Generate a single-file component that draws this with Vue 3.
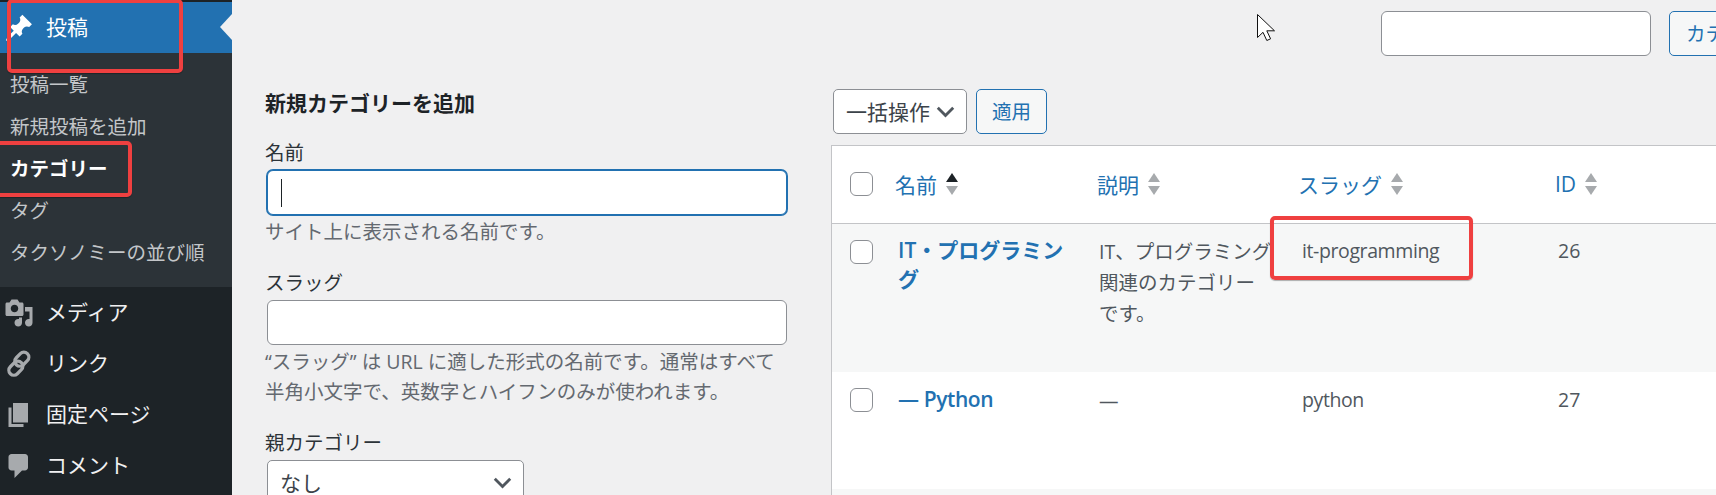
<script setup>
const sub = [
  { label: '投稿一覧' },
  { label: '新規投稿を追加' },
  { label: 'カテゴリー', current: true },
  { label: 'タグ' },
  { label: 'タクソノミーの並び順' }
]
const columns = [
  { label: '名前', active: true },
  { label: '説明' },
  { label: 'スラッグ' },
  { label: 'ID' }
]
</script>

<template>
  <div class="page">
    <aside class="sidebar">
      <div class="item active">
        <svg class="icon" viewBox="0 0 20 20"><path d="M10.44 3.02l1.82-1.82 6.36 6.35-1.83 1.82c-1.05-.68-2.48-.57-3.41.36l-.75.75c-.92.93-1.04 2.35-.35 3.41l-1.83 1.82-2.41-2.41-2.8 2.79c-.42.42-3.38 2.71-3.8 2.29s1.86-3.39 2.28-3.81l2.79-2.79L4.1 9.36l1.83-1.82c1.05.69 2.48.57 3.4-.36l.75-.75c.93-.92 1.05-2.35.36-3.41z"/></svg>
        <span>投稿</span>
        <i class="notch"></i>
      </div>
      <ul class="submenu">
        <li v-for="s in sub" :key="s.label" :class="{ current: s.current }">{{ s.label }}</li>
      </ul>
      <div class="item">
        <svg class="icon" viewBox="0 0 20 20"><path d="M13 11V4c0-.55-.45-1-1-1h-1.67L9 1H5L3.67 3H2c-.55 0-1 .45-1 1v7c0 .55.45 1 1 1h10c.55 0 1-.45 1-1zM7 4.5c1.38 0 2.5 1.12 2.5 2.5S8.38 9.5 7 9.5 4.5 8.38 4.5 7 5.62 4.5 7 4.5zM14 6h5v10.5c0 1.38-1.12 2.5-2.5 2.5S14 17.88 14 16.5s1.12-2.5 2.5-2.5c.17 0 .34.02.5.05V9h-3V6zm-4 8.05V13h2v3.5c0 1.38-1.12 2.5-2.5 2.5S7 17.88 7 16.5 8.12 14 9.5 14c.17 0 .34.02.5.05z"/></svg>
        <span>メディア</span>
      </div>
      <div class="item">
        <svg class="icon" viewBox="0 0 20 20"><g fill="none" stroke="#a7aaad" stroke-width="2.2"><rect x="8.6" y="1.6" width="6.6" height="10.4" rx="3.3" transform="rotate(45 11.9 6.8)"/><rect x="4.6" y="7.6" width="6.6" height="10.4" rx="3.3" transform="rotate(45 7.9 12.8)"/></g></svg>
        <span>リンク</span>
      </div>
      <div class="item">
        <svg class="icon" viewBox="0 0 20 20"><path d="M6 15V2h10v13H6zm-1 1h8v2H3V5h2v11z"/></svg>
        <span>固定ページ</span>
      </div>
      <div class="item">
        <svg class="icon" viewBox="0 0 20 20"><path d="M5 2h9c1.1 0 2 .9 2 2v7c0 1.1-.9 2-2 2h-2l-5 5v-5H5c-1.1 0-2-.9-2-2V4c0-1.1.9-2 2-2z"/></svg>
        <span>コメント</span>
      </div>
    </aside>

    <section class="form">
      <h2>新規カテゴリーを追加</h2>
      <label>名前</label>
      <div class="input focus"><i class="caret"></i></div>
      <p class="hint">サイト上に表示される名前です。</p>
      <label class="next">スラッグ</label>
      <div class="input"></div>
      <p class="hint">“スラッグ” は URL に適した形式の名前です。通常はすべて<br>半角小文字で、英数字とハイフンのみが使われます。</p>
      <label class="next">親カテゴリー</label>
      <div class="select parent">
        <span>なし</span>
        <svg class="chev" viewBox="0 0 16 10"><path d="M1.500 1.500L8 8l6.500-6.500" fill="none" stroke="#50575e" stroke-width="2.400"/></svg>
      </div>
    </section>

    <section class="list">
      <div class="search">
        <div class="input search-input"></div>
        <div class="btn search-btn">カテゴリーを検索</div>
      </div>
      <div class="bulk">
        <div class="select bulk-select">
          <span>一括操作</span>
          <svg class="chev" viewBox="0 0 16 10"><path d="M1.500 1.500L8 8l6.500-6.500" fill="none" stroke="#50575e" stroke-width="2.400"/></svg>
        </div>
        <div class="btn apply">適用</div>
      </div>
      <table>
        <colgroup>
          <col class="c0"><col class="c1"><col class="c2"><col class="c3"><col>
        </colgroup>
        <thead>
          <tr>
            <th class="cb"><i class="box"></i></th>
            <th v-for="c in columns" :key="c.label">
              <span class="th-inner">
                {{ c.label }}
                <svg class="sort" viewBox="0 0 14 24">
                  <path d="M7 1l6 9H1z" :fill="c.active ? '#1d2327' : '#a7aaad'"/>
                  <path d="M7 23L1 14h12z" fill="#a7aaad"/>
                </svg>
              </span>
            </th>
          </tr>
        </thead>
        <tbody>
          <tr class="alt r1">
            <td class="cb"><i class="box"></i></td>
            <td class="title">IT・プログラミン<br>グ</td>
            <td class="desc">IT、プログラミング<br>関連のカテゴリー<br>です。</td>
            <td class="latin slug">it-programming</td>
            <td>26</td>
          </tr>
          <tr class="r2">
            <td class="cb"><i class="box"></i></td>
            <td class="title latin">— Python</td>
            <td class="desc">—</td>
            <td class="latin slug">python</td>
            <td>27</td>
          </tr>
          <tr class="alt r3"><td colspan="5"></td></tr>
        </tbody>
      </table>
    </section>

    <svg class="cursor" viewBox="0 0 18 27"><path d="M.5.5v23l5.500-5.200 3.800 8.200 3.800-1.700-3.800-8h7.700z" fill="#fff" stroke="#111" stroke-width="1"/></svg>
    <i class="mark m1"></i>
    <i class="mark m2"></i>
    <i class="mark m3"></i>
  </div>
</template>

<style scoped>
.page {
  position: relative;
  display: flex;
  width: 1716px;
  height: 495px;
  overflow: hidden;
  background: #f0f0f1;
  font-family: "Open Sans", "Noto Sans CJK JP", sans-serif;
  font-size: 19.5px;
  color: #3c434a;
}
.sidebar {
  flex: 0 0 232px;
  background: #1d2327;
  padding-top: 2px;
  color: #f0f0f1;
}
.item {
  position: relative;
  display: flex;
  align-items: center;
  height: 51px;
  padding-left: 4px;
  font-size: 21px;
}
.item span { margin: 0 0 3px 12px; }
.item.active { background: #2271b1; color: #fff; }
.icon { width: 30px; height: 30px; flex: none; fill: #a7aaad; }
.active .icon { fill: #fff; }
.notch {
  position: absolute;
  right: 0;
  top: 12px;
  border: 13px solid transparent;
  border-left-width: 0;
  border-right: 12px solid #f0f0f1;
}
.submenu {
  list-style: none;
  margin: 0;
  padding: 11px 0 13px 10px;
  height: 234px;
  box-sizing: border-box;
  background: #2c3338;
  color: #c3c6c9;
}
.submenu li { height: 42px; line-height: 42px; font-size: 19.5px; white-space: nowrap; }
.submenu .current { color: #fff; font-weight: 700; }

.form {
  flex: 0 0 524px;
  margin-left: 33px;
  padding-top: 88px;
  color: #2c3338;
}
.form h2 { margin: 0 0 21px; font-size: 21px; line-height: 30px; font-weight: 700; color: #1d2327; }
.form label { display: block; line-height: 28px; margin-bottom: 3px; color: #2c3338; }
.form label.next { margin-top: 22px; }
.input {
  height: 45px;
  box-sizing: border-box;
  background: #fff;
  border: 1px solid #8c8f94;
  border-radius: 6px;
}
.form .input { margin: 0 2px; }
.input.focus {
  position: relative;
  border-color: #2271b1;
  box-shadow: 0 0 0 1px #2271b1;
}
.caret {
  position: absolute;
  left: 13px;
  top: 8px;
  width: 1px;
  height: 28px;
  background: #1d2327;
}
.hint { margin: 2px 0 0; line-height: 30px; color: #646970; white-space: nowrap; }
.select {
  display: flex;
  align-items: center;
  justify-content: space-between;
  box-sizing: border-box;
  height: 45px;
  background: #fff;
  border: 1px solid #8c8f94;
  border-radius: 5px;
  color: #3c434a;
  font-size: 21px;
}
.select span { margin-bottom: 2px; }
.parent { width: 257px; margin-left: 2px; padding: 0 11px 0 12px; }
.chev { width: 19px; height: 12px; flex: none; }

.list { flex: 0 0 885px; margin-left: 42px; }
.search { display: flex; gap: 18px; padding: 11px 0 0 550px; white-space: nowrap; }
.search-input { flex: 0 0 270px; }
.btn {
  box-sizing: border-box;
  height: 45px;
  line-height: 43px;
  background: #f6f7f7;
  border: 1px solid #2271b1;
  border-radius: 5px;
  color: #2271b1;
}
.search-btn { flex: none; padding: 0 16px; }
.bulk { display: flex; gap: 9px; margin-top: 33px; padding-left: 2px; }
.bulk-select { width: 134px; padding: 0 11px 0 12px; }
.apply { width: 71px; text-align: center; }

table {
  width: 885px;
  margin-top: 11px;
  border-collapse: separate;
  border-spacing: 0;
  table-layout: fixed;
  background: #fff;
  border-top: 1px solid #c3c4c7;
  border-left: 1px solid #c3c4c7;
}
.c0 { width: 53px; }
.c1 { width: 202px; }
.c2 { width: 201px; }
.c3 { width: 257px; }
th {
  box-sizing: border-box;
  height: 78px;
  padding: 0 0 2px 10px;
  text-align: left;
  font-weight: 400;
  font-size: 21px;
  color: #2271b1;
  border-bottom: 1px solid #c3c4c7;
  vertical-align: middle;
}
.th-inner { display: inline-flex; align-items: center; white-space: nowrap; }
.sort { width: 14px; height: 24px; margin-left: 8px; }
td {
  box-sizing: border-box;
  padding: 13px 0 0 13px;
  line-height: 30px;
  vertical-align: top;
  color: #50575e;
  white-space: nowrap;
}
.r1 td { height: 148px; padding-top: 12px; }
.r2 td { height: 117px; }
.r3 td { height: 10px; padding: 0; }
th.cb, .r1 td.cb, .r2 td.cb { padding: 0 0 2px 18px; }
.r1 td.cb, .r2 td.cb { padding-top: 16px; }
.r1 td.desc, .r2 td.desc { padding-left: 12px; }
.r1 td.slug, .r2 td.slug { padding-left: 14px; }
.box {
  display: block;
  box-sizing: border-box;
  width: 23px;
  height: 24px;
  background: #fff;
  border: 1px solid #8c8f94;
  border-radius: 6px;
}
td.title { font-size: 21px; line-height: 29px; font-weight: 600; color: #2271b1; }
td.desc { line-height: 31px; }
.latin { letter-spacing: -.4px; }
.alt { background: #f6f7f7; }

.cursor { position: absolute; left: 1257px; top: 14px; width: 18px; height: 27px; }
.mark {
  position: absolute;
  box-sizing: border-box;
  border: 4px solid #ef4040;
  border-radius: 5px;
  box-shadow: 0 1px 1px rgba(0, 0, 0, .3);
}
.m1 { left: 7px; top: -1px; width: 176px; height: 74px; }
.m2 { left: -8px; top: 141px; width: 140px; height: 56px; }
.m3 { left: 1270px; top: 216px; width: 203px; height: 64px; }
</style>
